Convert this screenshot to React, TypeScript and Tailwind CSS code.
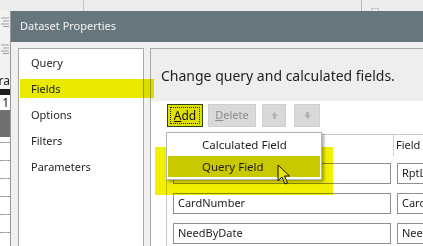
import React from "react";

const navItems = ["Query", "Fields", "Options", "Filters", "Parameters"];

function ArrowBtn({ up }: { up?: boolean }) {
  return (
    <div className="h-[23px] bg-[#d9d9d9] border border-[#cfcfcf] flex items-center justify-center">
      <svg width="9" height="9" viewBox="0 0 9 9" className={up ? "" : "rotate-180"}>
        <path d="M4.5 1 L8 5 L6 5 L6 8 L3 8 L3 5 L1 5 Z" fill="#b4b4b4" />
      </svg>
    </div>
  );
}

function LeftStrip() {
  return (
    <div className="w-[11px] flex flex-col border-r border-[#9a9a9a] bg-[#f2f2f2] overflow-hidden">
      <div className="h-[62px] flex flex-col items-end gap-[17px] pt-[6px] pr-[1px]">
        <svg width="8" height="10" viewBox="0 0 8 10">
          <path d="M0 1h8M2 4h6M0 7h8M2 9.5h6" stroke="#9c9c9c" strokeWidth="1" />
        </svg>
        <svg width="8" height="10" viewBox="0 0 8 10">
          <path d="M0 1h8M2 4h6M0 7h8M2 9.5h6" stroke="#9c9c9c" strokeWidth="1" />
        </svg>
      </div>
      <div className="h-[16px] flex justify-end items-center text-[12px] leading-none text-[#222]">ra</div>
      <div className="h-[6px] bg-[#1e1e1e]" />
      <div className="h-[15px] bg-white flex justify-end items-center pr-[1px] text-[12px] leading-none text-[#111]">1</div>
      <div className="h-[27px] bg-[#707070]" />
      <div className="flex-1 bg-white flex flex-col gap-[17px] pt-[5px]">
        {[0, 1, 2, 3, 4, 5].map((i) => (
          <div key={i} className="border-t border-dashed border-[#9a9a9a]" />
        ))}
      </div>
    </div>
  );
}

export default function App() {
  return (
    <div className="w-[423px] h-[246px] overflow-hidden relative bg-[#f0f0f0] flex flex-col font-['Noto_Sans',sans-serif]">
      {/* app toolbar behind the dialog */}
      <div className="h-[11px] bg-[#ededed] relative shrink-0">
        <div className="absolute left-[83px] top-0 h-[11px] border-l border-[#c4c4c4]" />
        <div className="absolute left-[361px] top-0 h-[11px] border-l border-[#b8b8b8]" />
        <div className="absolute left-[371px] top-[8px] w-[8px] h-[3px] border border-b-0 border-[#c8c8c8]" />
      </div>

      <div className="flex flex-1 min-h-0">
        <LeftStrip />

        {/* Dialog */}
        <div className="flex-1 flex flex-col min-w-0">
          <div className="h-[31px] bg-[#66767c] flex items-center pl-[9px] text-[11px] text-[#f4f4f4] shrink-0">
            Dataset Properties
          </div>

          <div className="flex-1 flex pt-[6px] pl-[7px] gap-[6px] bg-[#f0f0f0] min-h-0">
            {/* Nav */}
            <div className="w-[126px] shrink-0 bg-white border border-[#a9a9a9] border-b-0 pt-[1px] flex flex-col">
              {navItems.map((n) => (
                <div key={n} className="h-[26px] flex items-center pl-[12px] text-[11px] text-[#262626]">
                  {n}
                </div>
              ))}
            </div>

            {/* Content */}
            <div className="flex-1 min-w-0 border-l border-t border-[#a9a9a9] bg-white flex flex-col">
              <div className="h-[57px] bg-[#eeeeee] flex items-center pl-[10px] pt-[1px] text-[14px] text-[#1e1e1e] whitespace-nowrap">
                Change query and calculated fields.
              </div>

              <div className="flex items-start pl-[16px] pt-[3px] text-[11px]">
                <div className="w-[36px] h-[23px] bg-[#dfdf00] border border-[#2c4812] p-[2px]">
                  <div className="w-full h-full border border-dotted border-[#1a2a08] flex items-center justify-center leading-none text-[#111] text-[12px]">
                    <span>
                      <span className="underline">A</span>dd
                    </span>
                  </div>
                </div>
                <div className="ml-[5px] w-[48px] h-[23px] bg-[#d9d9d9] border border-[#cfcfcf] flex items-center justify-center text-[#8c8c8c]">
                  <span>
                    <span className="underline">D</span>elete
                  </span>
                </div>
                <div className="ml-[6px] w-[24px]">
                  <ArrowBtn up />
                </div>
                <div className="ml-[8px] w-[26px]">
                  <ArrowBtn />
                </div>
              </div>

              {/* Field grid */}
              <div className="ml-[15px] mt-[7px] flex-1 border-l border-t border-[#c8c8c8] grid grid-cols-[226px_1fr] content-start text-[11px] text-[#1e1e1e]">
                <div className="h-[21px]" />
                <div className="h-[21px] border-l border-[#d4d4d4] flex items-center pl-[2px] whitespace-nowrap">Field</div>
                {[
                  ["RptLongDateGeo", "RptLongDate"],
                  ["CardNumber", "CardNumber"],
                  ["NeedByDate", "NeedByDate"],
                ].map(([a, b]) => (
                  <React.Fragment key={a}>
                    <div className="pl-[6px] pr-[2px] pt-[7px] pb-[2px]">
                      <div className="h-[21px] border border-[#8f8f8f] bg-white flex items-center pl-[4px] whitespace-nowrap overflow-hidden">
                        {a}
                      </div>
                    </div>
                    <div className="pl-[4px] pt-[7px] pb-[2px]">
                      <div className="h-[21px] border border-[#8f8f8f] border-r-0 bg-white flex items-center pl-[4px] whitespace-nowrap overflow-hidden">
                        {b}
                      </div>
                    </div>
                  </React.Fragment>
                ))}
              </div>
            </div>
          </div>
        </div>
      </div>

      {/* highlighter marks */}
      <div className="absolute left-[20px] top-[79px] w-[134px] h-[19px] bg-[#eaea00] mix-blend-multiply" />
      <div className="absolute left-[155px] top-[147px] w-[178px] h-[48px] bg-[#f0f000] mix-blend-multiply" />

      {/* Add dropdown */}
      <div className="absolute left-[166px] top-[132px] w-[156px] h-[48px] bg-white border border-[#b4b4b4] shadow-[2px_2px_3px_rgba(0,0,0,0.35)] p-[1px] flex flex-col text-[11.5px] text-[#1e1e1e]">
        <div className="h-[22px] flex items-center pl-[34px]">Calculated Field</div>
        <div className="h-[21px] bg-[#c9c900] flex items-center pl-[34px]">Query Field</div>
      </div>

      {/* cursor */}
      <svg className="absolute left-[277px] top-[164px]" width="14" height="22" viewBox="0 0 14 22">
        <path d="M1 1 L1 17 L5 13 L8 20 L10.5 19 L7.5 12 L12.5 12 Z" fill="#e6e600" stroke="#111" strokeWidth="1" strokeLinejoin="round" />
      </svg>
    </div>
  );
}
